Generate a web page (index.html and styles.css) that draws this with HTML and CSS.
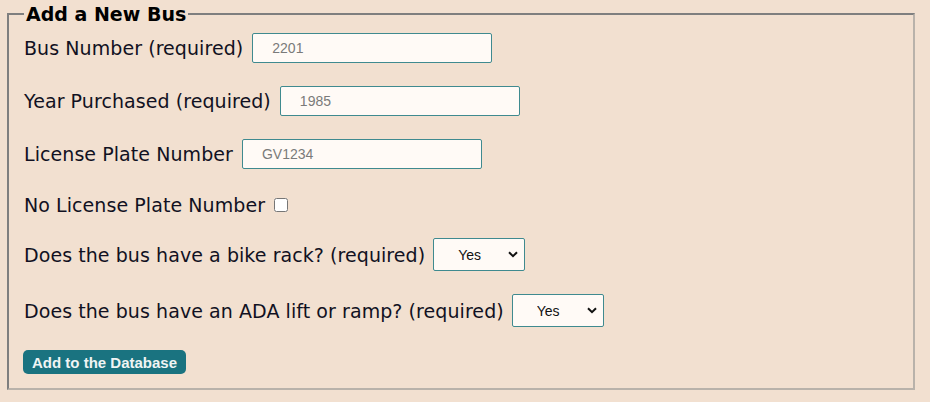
FILE: index.html
```html
<!DOCTYPE html>
<html lang="en">
<head>
<meta charset="utf-8">
<title>Add a New Bus</title>
<link rel="stylesheet" href="styles.css">
</head>
<body>
<form class="bus-form">
  <fieldset class="box">
    <legend class="box-title">Add a New Bus</legend>
    <div class="row">
      <label class="lbl" for="busnum">Bus Number (required)</label>
      <input class="txt" id="busnum" type="text" placeholder="2201">
    </div>
    <div class="row">
      <label class="lbl" for="year">Year Purchased (required)</label>
      <input class="txt" id="year" type="text" placeholder="1985">
    </div>
    <div class="row">
      <label class="lbl" for="plate">License Plate Number</label>
      <input class="txt" id="plate" type="text" placeholder="GV1234">
    </div>
    <div class="row row-check">
      <label class="lbl" for="noplate">No License Plate Number</label>
      <input class="chk" id="noplate" type="checkbox">
    </div>
    <div class="row row-select">
      <label class="lbl" for="bike">Does the bus have a bike rack? (required)</label>
      <div class="sel-wrap">
        <select class="sel" id="bike"><option>Yes</option><option>No</option></select>
        <svg class="chev" width="10" height="7" viewBox="0 0 10 7"><path d="M1 1.2 L5 5.2 L9 1.2" fill="none" stroke="#111" stroke-width="2"/></svg>
      </div>
    </div>
    <div class="row row-select">
      <label class="lbl" for="ada">Does the bus have an ADA lift or ramp? (required)</label>
      <div class="sel-wrap">
        <select class="sel" id="ada"><option>Yes</option><option>No</option></select>
        <svg class="chev" width="10" height="7" viewBox="0 0 10 7"><path d="M1 1.2 L5 5.2 L9 1.2" fill="none" stroke="#111" stroke-width="2"/></svg>
      </div>
    </div>
    <div class="row row-btn">
      <button class="btn" type="button">Add to the Database</button>
    </div>
  </fieldset>
</form>
</body>
</html>
```

FILE: styles.css
```css
html, body {
  margin: 0;
  padding: 0;
  background: #f2e0d0;
}
body {
  font-family: "DejaVu Sans", Verdana, sans-serif;
  font-size: 19px;
  color: #111122;
}
.bus-form {
  padding: 3px 0 0 7px;
}
.box {
  width: 874px;
  margin: 0;
  padding: 8px 15px 14px 15px;
  border-color: #7f7f7f #b9b2aa #b9b2aa #7f7f7f;
  border-width: 2px;
  border-style: solid;
  display: flex;
  flex-direction: column;
  gap: 23px;
}
.box-title {
  font-weight: bold;
  font-size: 19px;
  padding: 0 2px;
  margin-left: 0;
  color: #000;
}
.row {
  display: flex;
  align-items: center;
  min-height: 30px;
  letter-spacing: 0.07px;
}
.row-check {
  min-height: 26px;
  margin-bottom: -3px;
}
.row-select { min-height: 33px; }
.row-btn { min-height: 24px; }
.lbl {
  white-space: nowrap;
}
.txt {
  box-sizing: border-box;
  width: 240px;
  height: 30px;
  margin-left: 9px;
  padding: 0 19px;
  border: 1px solid #3f8a8f;
  border-radius: 2px;
  background: #fffaf6;
  font-family: "Liberation Sans", Arial, sans-serif;
  font-size: 14px;
  letter-spacing: 0;
  color: #333;
}
.txt::placeholder { color: #7a7a7a; }
.chk {
  width: 14px;
  height: 14px;
  margin: 0 0 0 9px;
}
.sel-wrap {
  position: relative;
  margin-left: 8px;
}
.sel {
  -webkit-appearance: none;
  appearance: none;
  box-sizing: border-box;
  width: 92px;
  height: 33px;
  padding: 0 0 0 24px;
  border: 1px solid #3f8a8f;
  border-radius: 2px;
  background: #fffaf6;
  font-family: "Liberation Sans", Arial, sans-serif;
  font-size: 14px;
  letter-spacing: 0;
  color: #111;
}
.chev {
  position: absolute;
  right: 7px;
  top: 13px;
  pointer-events: none;
}
.btn {
  box-sizing: border-box;
  height: 24px;
  padding: 0 9px;
  margin-left: -1px;
  border: none;
  border-radius: 5px;
  background: #1a7380;
  color: #f0f4f4;
  font-family: "Liberation Sans", Arial, sans-serif;
  font-size: 15px;
  font-weight: bold;
  letter-spacing: 0;
}
```
